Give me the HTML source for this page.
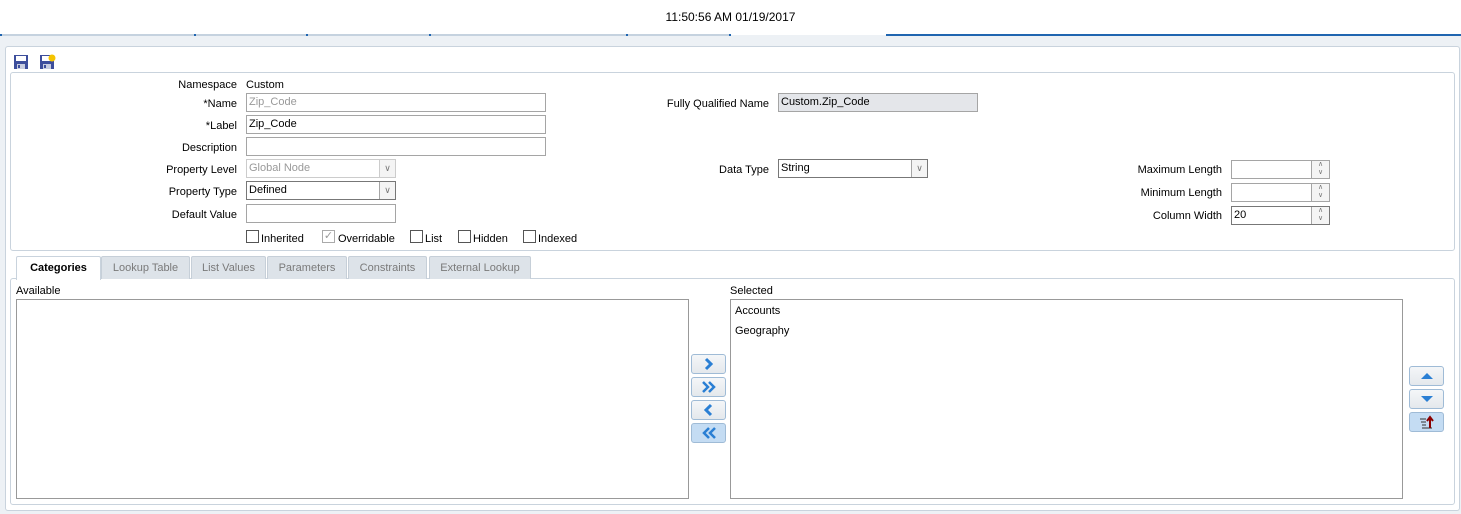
<!DOCTYPE html>
<html><head><style>
*{box-sizing:border-box;margin:0;padding:0}
body{width:1461px;height:514px;background:#edf1f5;font-family:"Liberation Sans",Arial,sans-serif;font-size:11px;color:#000;position:relative;overflow:hidden}
.a{position:absolute}
.top{left:0;top:0;width:1461px;height:35px;background:#fff}
.lbl{position:absolute;text-align:right;width:200px}
.inp{position:absolute;border:1px solid #a5a5a5;background:#fff;height:19px;padding:0 2px;font-size:11px;line-height:17px}
.dd{position:absolute;width:16px;top:0;right:0;bottom:0;border-left:1px solid #a5a5a5;background:#f4f4f4;text-align:center;font-size:9px;color:#777;line-height:17px}
.cb{position:absolute;width:13px;height:13px;border:1px solid #555;background:#fff}
.tab{position:absolute;top:256px;height:23px;border:1px solid #c6cfd8;border-bottom:none;background:#dde3e9;color:#7a7a7a;text-align:center;line-height:22px;font-size:11px;border-radius:2px 2px 0 0}
.btn{position:absolute;width:35px;height:20px;border:1px solid #9fbbd6;border-radius:3px;background:linear-gradient(#f4f6f8,#e4e8ec)}
.btn svg{position:absolute;left:9px;top:2px}
.spin{position:absolute;right:0;top:0;width:18px;height:17px;border-left:1px solid #a5a5a5;background:#f4f4f4;font-size:7px;color:#777;line-height:8px;text-align:center}
</style></head><body>
<div class="a top"></div>
<div class="a" style="left:0;top:10px;width:1461px;text-align:center;font-size:12px">11:50:56 AM 01/19/2017</div>
<div class="a" style="left:0;top:34px;width:730px;height:2px;background:#c5d2df"></div>
<div class="a" style="left:886px;top:34px;width:575px;height:2px;background:#1f65b0"></div>
<div class="a" style="left:0;top:34px;width:2px;height:2px;background:#1f65b0"></div>
<div class="a" style="left:194px;top:34px;width:2px;height:2px;background:#1f65b0"></div>
<div class="a" style="left:306px;top:34px;width:2px;height:2px;background:#1f65b0"></div>
<div class="a" style="left:429px;top:34px;width:2px;height:2px;background:#1f65b0"></div>
<div class="a" style="left:626px;top:34px;width:2px;height:2px;background:#1f65b0"></div>
<div class="a" style="left:729px;top:34px;width:2px;height:2px;background:#1f65b0"></div>

<div class="a" style="left:5px;top:46px;width:1455px;height:465px;background:#fff;border:1px solid #c9d3dd;border-radius:3px"></div>
<svg class="a" style="left:13px;top:54px" width="16" height="16"><rect x="1" y="1" width="14" height="14" fill="#3d4e9c"/><rect x="3" y="2" width="10" height="5" fill="#fff"/><rect x="4" y="10" width="8" height="5" fill="#c8cde0"/><rect x="5" y="11" width="2" height="3" fill="#3d4e9c"/></svg>
<svg class="a" style="left:39px;top:54px" width="17" height="16"><rect x="1" y="1" width="14" height="14" fill="#3d4e9c"/><rect x="3" y="2" width="10" height="5" fill="#fff"/><rect x="4" y="10" width="8" height="5" fill="#c8cde0"/><rect x="5" y="11" width="2" height="3" fill="#3d4e9c"/><circle cx="13" cy="4" r="3.5" fill="#f5c400"/></svg>

<div class="a" style="left:10px;top:72px;width:1445px;height:179px;border:1px solid #c9d3dd;border-radius:3px"></div>
<div class="lbl" style="left:37px;top:79px">Namespace</div><div class="a" style="left:246px;top:79px">Custom</div>
<div class="lbl" style="left:37px;top:98px">*Name</div><div class="inp" style="left:246px;top:93px;width:300px;color:#999">Zip_Code</div>
<div class="lbl" style="left:37px;top:120px">*Label</div><div class="inp" style="left:246px;top:115px;width:300px">Zip_Code</div>
<div class="lbl" style="left:37px;top:142px">Description</div><div class="inp" style="left:246px;top:137px;width:300px"></div>
<div class="lbl" style="left:37px;top:164px">Property Level</div><div class="inp" style="left:246px;top:159px;width:150px;color:#999;border-color:#ccc">Global Node<div class="dd" style="border-color:#ccc">&#8744;</div></div>
<div class="lbl" style="left:37px;top:186px">Property Type</div><div class="inp" style="left:246px;top:181px;width:150px;border-color:#777">Defined<div class="dd">&#8744;</div></div>
<div class="lbl" style="left:37px;top:209px">Default Value</div><div class="inp" style="left:246px;top:204px;width:150px"></div>
<div class="cb" style="left:246px;top:230px"></div><div class="a" style="left:261px;top:233px">Inherited</div>
<div class="cb" style="left:322px;top:230px;border-color:#aaa;color:#999;font-size:11px;line-height:11px;text-align:center">&#10003;</div><div class="a" style="left:338px;top:233px">Overridable</div>
<div class="cb" style="left:410px;top:230px"></div><div class="a" style="left:425px;top:233px">List</div>
<div class="cb" style="left:458px;top:230px"></div><div class="a" style="left:473px;top:233px">Hidden</div>
<div class="cb" style="left:523px;top:230px"></div><div class="a" style="left:538px;top:233px">Indexed</div>

<div class="lbl" style="left:569px;top:98px">Fully Qualified Name</div><div class="inp" style="left:778px;top:93px;width:200px;background:#e4e6ea">Custom.Zip_Code</div>
<div class="lbl" style="left:569px;top:164px">Data Type</div><div class="inp" style="left:778px;top:159px;width:150px;border-color:#777">String<div class="dd">&#8744;</div></div>

<div class="lbl" style="left:1022px;top:164px">Maximum Length</div><div class="inp" style="left:1231px;top:160px;width:99px"><div class="spin">&#8743;<br>&#8744;</div></div>
<div class="lbl" style="left:1022px;top:187px">Minimum Length</div><div class="inp" style="left:1231px;top:183px;width:99px"><div class="spin">&#8743;<br>&#8744;</div></div>
<div class="lbl" style="left:1022px;top:210px">Column Width</div><div class="inp" style="left:1231px;top:206px;width:99px;border-color:#777">20<div class="spin">&#8743;<br>&#8744;</div></div>

<div class="a" style="left:10px;top:278px;width:1445px;height:227px;border:1px solid #c9d3dd;border-radius:3px"></div>
<div class="tab" style="left:16px;width:85px;background:#fff;color:#000;font-weight:bold;border-color:#c9d3dd;height:24px">Categories</div>
<div class="tab" style="left:101px;width:89px">Lookup Table</div>
<div class="tab" style="left:191px;width:75px">List Values</div>
<div class="tab" style="left:267px;width:80px">Parameters</div>
<div class="tab" style="left:348px;width:79px">Constraints</div>
<div class="tab" style="left:429px;width:102px">External Lookup</div>

<div class="a" style="left:16px;top:285px">Available</div>
<div class="a" style="left:16px;top:299px;width:673px;height:200px;border:1px solid #999"></div>
<div class="a" style="left:730px;top:285px">Selected</div>
<div class="a" style="left:730px;top:299px;width:673px;height:200px;border:1px solid #999"></div>
<div class="a" style="left:735px;top:305px">Accounts</div>
<div class="a" style="left:735px;top:325px">Geography</div>

<div class="btn" style="left:691px;top:354px"><svg width="16" height="14"><path d="M5 2l5 5-5 5" fill="none" stroke="#2a7fd4" stroke-width="3"/></svg></div>
<div class="btn" style="left:691px;top:377px"><svg width="16" height="14"><path d="M2 2l5 5-5 5M8 2l5 5-5 5" fill="none" stroke="#2a7fd4" stroke-width="2.5"/></svg></div>
<div class="btn" style="left:691px;top:400px"><svg width="16" height="14"><path d="M10 2l-5 5 5 5" fill="none" stroke="#2a7fd4" stroke-width="3"/></svg></div>
<div class="btn" style="left:691px;top:423px;background:#c4dcf3"><svg width="16" height="14"><path d="M8 2l-5 5 5 5M14 2l-5 5 5 5" fill="none" stroke="#2a7fd4" stroke-width="2.5"/></svg></div>

<div class="btn" style="left:1409px;top:366px"><svg width="16" height="14"><path d="M2 10l6-6 6 6z" fill="#2a7fd4"/></svg></div>
<div class="btn" style="left:1409px;top:389px"><svg width="16" height="14"><path d="M2 4l6 6 6-6z" fill="#2a7fd4"/></svg></div>
<div class="btn" style="left:1409px;top:412px;background:#c4dcf3"><svg width="18" height="16"><path d="M1 4h6M2 7h5M3 10h4M3 13h10" stroke="#333" stroke-width="1"/><path d="M11 13V3M8 6l3-4 3 4" fill="none" stroke="#8b0000" stroke-width="2"/></svg></div>
</body></html>
